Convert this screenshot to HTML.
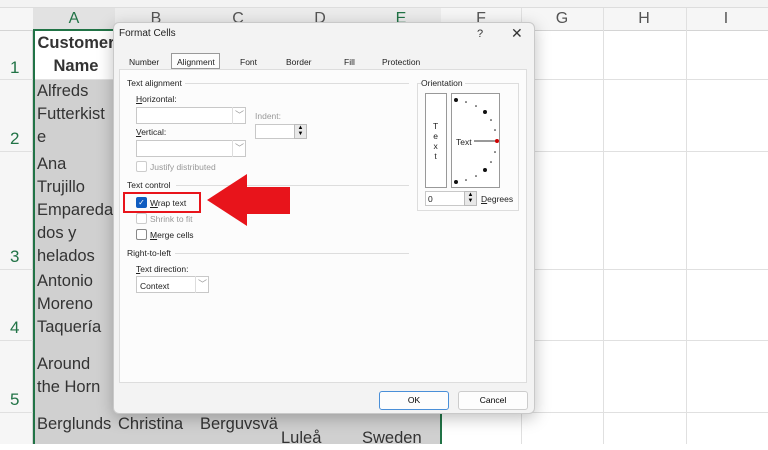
<!DOCTYPE html>
<html><head><meta charset="utf-8"><style>
*{margin:0;padding:0;box-sizing:border-box}
body{width:768px;height:444px;overflow:hidden;background:#fff;font-family:"Liberation Sans",sans-serif;position:relative}
.a{position:absolute}
.cl{font-size:16px;color:#555;text-align:center;width:82px;top:10px}
.cell{font-size:16.5px;color:#333;line-height:23px}
.d{font-size:8.5px;color:#222}
.g{color:#999}
.box{border:1px solid #c8c8c8;background:#fff}
.cb{width:11px;height:11px;border:1px solid #888;border-radius:2px;background:#fff}
</style></head><body>
<!-- top strip -->
<div class="a" style="left:0;top:0;width:768px;height:8px;background:#f3f3f3;border-bottom:1px solid #ddd"></div>
<!-- header row -->
<div class="a" style="left:0;top:8px;width:768px;height:23px;background:#f6f6f6;border-bottom:1px solid #d4d4d4"></div>
<div class="a" style="left:33px;top:8px;width:82px;height:23px;background:#e2e2e2;border-bottom:2px solid #217346"></div>
<div class="a" style="left:115px;top:8px;width:326px;height:23px;background:#ececec"></div>
<div class="a cl" style="left:33px;color:#217346">A</div>
<div class="a cl" style="left:115px">B</div><div class="a cl" style="left:197px">C</div><div class="a cl" style="left:279px">D</div><div class="a cl" style="left:361px;width:80px;color:#217346">E</div>
<div class="a cl" style="left:441px;width:80px">F</div><div class="a cl" style="left:521px">G</div><div class="a cl" style="left:603px">H</div><div class="a cl" style="left:685px">I</div>
<!-- row header column -->
<div class="a" style="left:0;top:31px;width:33px;height:413px;background:#f6f6f6;border-right:1px solid #d4d4d4"></div>
<!-- gridlines -->
<div class="a" style="left:0;top:79px;width:768px;height:1px;background:#e0e0e0"></div>
<div class="a" style="left:0;top:151px;width:768px;height:1px;background:#e0e0e0"></div>
<div class="a" style="left:0;top:269px;width:768px;height:1px;background:#e0e0e0"></div>
<div class="a" style="left:0;top:340px;width:768px;height:1px;background:#e0e0e0"></div>
<div class="a" style="left:0;top:412px;width:768px;height:1px;background:#e0e0e0"></div>
<div class="a" style="left:521px;top:8px;width:1px;height:436px;background:#e0e0e0"></div>
<div class="a" style="left:603px;top:8px;width:1px;height:436px;background:#e0e0e0"></div>
<div class="a" style="left:686px;top:8px;width:1px;height:436px;background:#e0e0e0"></div>
<!-- row numbers -->
<div class="a" style="left:10px;top:58px;font-size:17px;color:#217346">1</div>
<div class="a" style="left:10px;top:129px;font-size:17px;color:#217346">2</div>
<div class="a" style="left:10px;top:247px;font-size:17px;color:#217346">3</div>
<div class="a" style="left:10px;top:318px;font-size:17px;color:#217346">4</div>
<div class="a" style="left:10px;top:390px;font-size:17px;color:#217346">5</div>
<!-- column A -->
<div class="a" style="left:33px;top:80px;width:82px;height:364px;background:#d0d0d0"></div>
<div class="a" style="left:115px;top:413px;width:326px;height:31px;background:#d0d0d0"></div>
<div class="a" style="left:33px;top:31px;width:2px;height:413px;background:#217346"></div>
<div class="a" style="left:440px;top:413px;width:2px;height:31px;background:#217346"></div>
<div class="a cell" style="left:37px;top:32px;font-weight:bold;text-align:center;width:78px">Customer<br>Name</div>
<div class="a cell" style="left:37px;top:80px">Alfreds<br>Futterkist<br>e</div>
<div class="a cell" style="left:37px;top:153px">Ana<br>Trujillo<br>Empareda<br>dos y<br>helados</div>
<div class="a cell" style="left:37px;top:270px">Antonio<br>Moreno<br>Taquería</div>
<div class="a cell" style="left:37px;top:353px">Around<br>the Horn</div>
<div class="a cell" style="left:37px;top:413px">Berglunds</div>
<div class="a cell" style="left:118px;top:413px">Christina</div>
<div class="a cell" style="left:200px;top:413px">Berguvsvä</div>
<div class="a cell" style="left:281px;top:427px">Luleå</div>
<div class="a cell" style="left:362px;top:427px">Sweden</div>
<!-- dialog -->
<div class="a" style="left:113px;top:22px;width:422px;height:392px;background:#f3f3f3;border:1px solid #c9c9c9;border-radius:6px;box-shadow:0 4px 16px rgba(0,0,0,.25)"></div>
<div class="a" style="left:119px;top:28px;font-size:10px;color:#222">Format Cells</div>
<div class="a" style="left:477px;top:28px;font-size:11px;color:#333">?</div>
<div class="a" style="left:511px;top:25px;font-size:14px;color:#333">✕</div>
<!-- tabs -->
<div class="a" style="left:119px;top:69px;width:408px;height:314px;background:#fcfcfc;border:1px solid #ddd"></div>
<div class="a d" style="left:129px;top:57px">Number</div>
<div class="a" style="left:171px;top:53px;width:49px;height:16px;background:#fcfcfc;border:1px solid #999"></div>
<div class="a d" style="left:177px;top:57px">Alignment</div>
<div class="a d" style="left:240px;top:57px">Font</div>
<div class="a d" style="left:286px;top:57px">Border</div>
<div class="a d" style="left:344px;top:57px">Fill</div>
<div class="a d" style="left:382px;top:57px">Protection</div>
<!-- left content -->
<div class="a d" style="left:127px;top:78px">Text alignment</div>
<div class="a" style="left:185px;top:83px;width:224px;height:1px;background:#ddd"></div>
<div class="a d" style="left:136px;top:94px"><u>H</u>orizontal:</div>
<div class="a box" style="left:136px;top:107px;width:110px;height:17px"></div>
<div class="a" style="left:232px;top:107px;width:1px;height:17px;background:#ddd"></div>
<div class="a g" style="left:235px;top:108px;font-size:9px">﹀</div>
<div class="a d g" style="left:255px;top:111px">Indent:</div>
<div class="a box" style="left:255px;top:124px;width:52px;height:15px"></div>
<div class="a" style="left:294px;top:124px;width:13px;height:15px;background:#e8e8e8;border:1px solid #bbb;font-size:6px;text-align:center;line-height:6px">▲<br>▼</div>
<div class="a d" style="left:136px;top:127px"><u>V</u>ertical:</div>
<div class="a box" style="left:136px;top:140px;width:110px;height:17px"></div>
<div class="a" style="left:232px;top:140px;width:1px;height:17px;background:#ddd"></div>
<div class="a g" style="left:235px;top:141px;font-size:9px">﹀</div>
<div class="a cb" style="left:136px;top:161px;border-color:#ccc"></div>
<div class="a d g" style="left:150px;top:162px">Justify distributed</div>
<div class="a d" style="left:127px;top:180px">Text control</div>
<div class="a" style="left:176px;top:185px;width:233px;height:1px;background:#ddd"></div>
<div class="a" style="left:123px;top:192px;width:78px;height:21px;border:2px solid #e8141b"></div>
<div class="a" style="left:136px;top:197px;width:11px;height:11px;background:#0f5cc0;border-radius:2px;color:#fff;font-size:8px;line-height:11px;text-align:center">✓</div>
<div class="a d" style="left:150px;top:198px"><u>W</u>rap text</div>
<div class="a cb" style="left:136px;top:213px;border-color:#ccc"></div>
<div class="a d g" style="left:150px;top:214px">Shrink to fit</div>
<div class="a cb" style="left:136px;top:229px"></div>
<div class="a d" style="left:150px;top:230px"><u>M</u>erge cells</div>
<div class="a d" style="left:127px;top:248px">Right-to-left</div>
<div class="a" style="left:175px;top:253px;width:234px;height:1px;background:#ddd"></div>
<div class="a d" style="left:136px;top:264px"><u>T</u>ext direction:</div>
<div class="a box" style="left:136px;top:276px;width:73px;height:17px"></div>
<div class="a d" style="left:140px;top:281px">Context</div>
<div class="a" style="left:195px;top:276px;width:1px;height:17px;background:#ddd"></div>
<div class="a g" style="left:198px;top:277px;font-size:9px">﹀</div>
<!-- orientation -->
<div class="a" style="left:417px;top:83px;width:102px;height:128px;border:1px solid #ddd"></div>
<div class="a d" style="left:421px;top:78px;background:#fcfcfc;padding-right:2px">Orientation</div>
<div class="a" style="left:425px;top:93px;width:22px;height:95px;border:1px solid #999;background:#fff"></div>
<div class="a d" style="left:433px;top:121px;line-height:10px;text-align:center">T<br>e<br>x<br>t</div>
<div class="a" style="left:451px;top:93px;width:49px;height:95px;border:1px solid #999;background:#fff"></div>
<svg class="a" style="left:451px;top:93px" width="49" height="95">
<circle cx="5" cy="7" r="2" fill="#111"/><circle cx="15" cy="9" r=".8" fill="#111"/><circle cx="25" cy="13" r=".8" fill="#111"/>
<circle cx="34" cy="19" r="2" fill="#111"/><circle cx="40" cy="27" r=".8" fill="#111"/><circle cx="44" cy="37" r=".8" fill="#111"/>
<line x1="23" y1="48" x2="45" y2="48" stroke="#333" stroke-width="1"/><circle cx="46" cy="48" r="2" fill="#c00"/>
<circle cx="44" cy="59" r=".8" fill="#111"/><circle cx="40" cy="69" r=".8" fill="#111"/><circle cx="34" cy="77" r="2" fill="#111"/>
<circle cx="25" cy="83" r=".8" fill="#111"/><circle cx="15" cy="87" r=".8" fill="#111"/><circle cx="5" cy="89" r="2" fill="#111"/>
<text x="5" y="52" font-size="8.5" font-family="Liberation Sans" fill="#222">Text</text>
</svg>
<div class="a box" style="left:425px;top:191px;width:52px;height:15px"></div>
<div class="a d" style="left:428px;top:194px">0</div>
<div class="a" style="left:464px;top:191px;width:13px;height:15px;background:#e8e8e8;border:1px solid #bbb;font-size:6px;text-align:center;line-height:6px">▲<br>▼</div>
<div class="a d" style="left:481px;top:194px"><u>D</u>egrees</div>
<!-- buttons -->
<div class="a" style="left:379px;top:391px;width:70px;height:19px;background:#fdfdfd;border:1px solid #4a8fd8;border-radius:3px;font-size:8.5px;text-align:center;line-height:17px">OK</div>
<div class="a" style="left:458px;top:391px;width:70px;height:19px;background:#fdfdfd;border:1px solid #ccc;border-radius:3px;font-size:8.5px;text-align:center;line-height:17px">Cancel</div>
<!-- arrow -->
<svg class="a" style="left:200px;top:170px" width="95" height="62"><polygon points="7,30 47,4 47,17 90,17 90,44 47,44 47,56" fill="#e8141b"/></svg>
</body></html>
